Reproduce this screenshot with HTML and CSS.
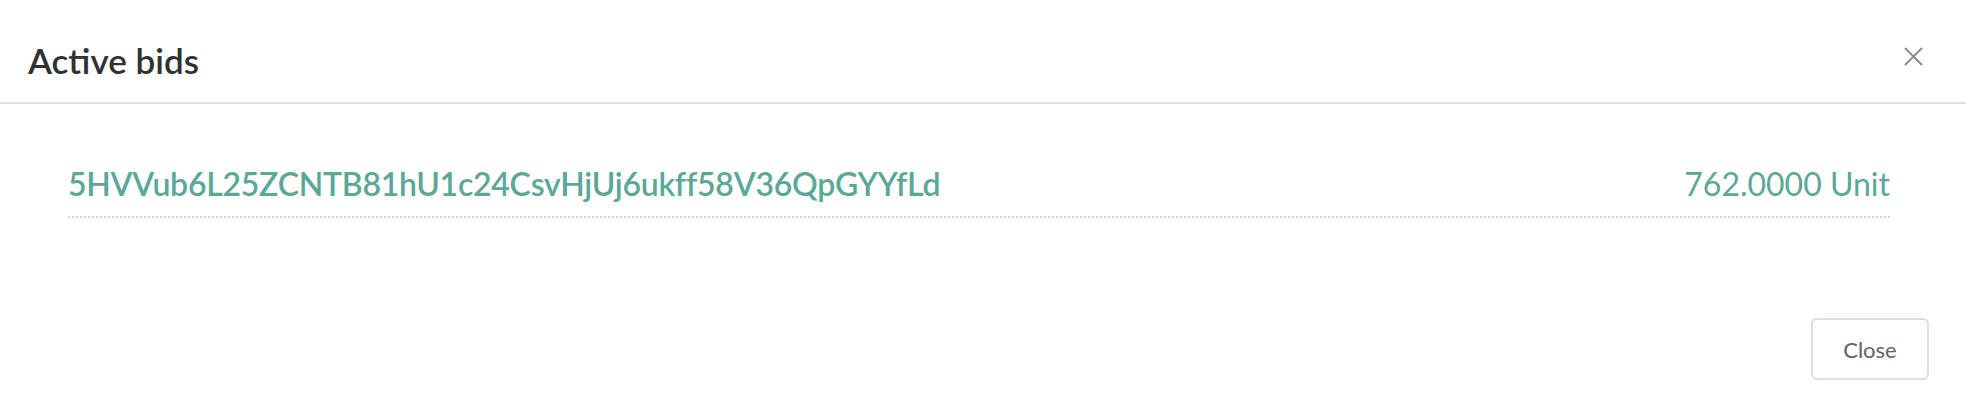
FILE: index.html
```html
<!DOCTYPE html>
<html lang="en">
<head>
<meta charset="utf-8">
<title>Active bids</title>
<link rel="stylesheet" href="styles.css">
</head>
<body>
<div class="modal">
  <header class="modal-header">
    <h2 class="modal-title">Active bids</h2>
    <button class="modal-close" aria-label="Close">
      <svg width="19" height="19" viewBox="0 0 19 19" aria-hidden="true">
        <path d="M1 1 L18 18 M18 1 L1 18" stroke="#8a8a8a" stroke-width="1.8" fill="none"/>
      </svg>
    </button>
  </header>
  <div class="modal-body">
    <div class="bid-row">
      <a class="bid-account" href="#">5HVVub6L25ZCNTB81hU1c24CsvHjUj6ukff58V36QpGYYfLd</a>
      <span class="bid-amount">762.0000 Unit</span>
    </div>
  </div>
  <footer class="modal-footer">
    <button class="btn-close">Close</button>
  </footer>
</div>
</body>
</html>
```
FILE: styles.css
```css
html, body {
  margin: 0;
  padding: 0;
  background: #ffffff;
}

body {
  font-family: "Lato", "Open Sans", sans-serif;
  color: #333;
}

.modal {
  width: 100%;
}

.modal-header {
  display: flex;
  justify-content: space-between;
  align-items: flex-start;
  height: 104px;
  box-sizing: border-box;
  padding: 40px 43px 0 28px;
  border-bottom: 2px solid #e1e1e1;
}

.modal-title {
  margin: 0;
  font-size: 35px;
  line-height: 40px;
  font-weight: 600;
  color: #303133;
}

.modal-close {
  display: block;
  margin: 7px 0 0 0;
  padding: 0;
  border: 0;
  background: none;
  width: 19px;
  height: 19px;
  cursor: pointer;
}

.modal-close svg {
  display: block;
}

.modal-body {
  padding: 60px 76px 100px 68px;
}

.bid-row {
  display: flex;
  justify-content: space-between;
  align-items: baseline;
  padding-bottom: 12px;
  border-bottom: 2px dotted #d4d4d4;
}

.bid-account {
  font-size: 32px;
  line-height: 40px;
  font-weight: 600;
  letter-spacing: -0.25px;
  color: #5ba898;
  text-decoration: none;
}

.bid-amount {
  font-size: 32px;
  line-height: 40px;
  font-weight: 400;
  color: #5ba898;
}

.modal-footer {
  display: flex;
  justify-content: flex-end;
  padding: 0 37px;
}

.btn-close {
  width: 118px;
  height: 62px;
  box-sizing: border-box;
  border: 2px solid #dedee4;
  border-radius: 6px;
  background: #fff;
  font-family: "Lato", "Open Sans", sans-serif;
  font-size: 22px;
  font-weight: 400;
  color: #606266;
  cursor: pointer;
  padding: 0;
}
```
